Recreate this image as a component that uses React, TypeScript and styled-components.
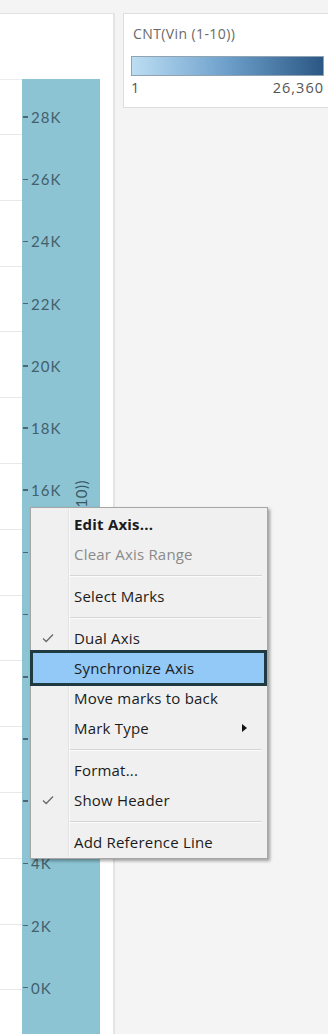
import React from 'react'
import styled, { createGlobalStyle } from 'styled-components'

const GlobalStyle = createGlobalStyle`
  html, body {
    margin: 0;
    padding: 0;
    background: #f4f4f4;
  }
  * {
    box-sizing: border-box;
  }
`

const TICKS = ['28K', '26K', '24K', '22K', '20K', '18K', '16K', '14K', '12K', '10K', '8K', '6K', '4K', '2K', '0K']
const GRID_ROWS = 14

type MenuEntry =
  | { kind: 'item'; label: string; bold?: boolean; disabled?: boolean; checked?: boolean; active?: boolean; submenu?: boolean }
  | { kind: 'sep' }

const MENU: MenuEntry[] = [
  { kind: 'item', label: 'Edit Axis...', bold: true },
  { kind: 'item', label: 'Clear Axis Range', disabled: true },
  { kind: 'sep' },
  { kind: 'item', label: 'Select Marks' },
  { kind: 'sep' },
  { kind: 'item', label: 'Dual Axis', checked: true },
  { kind: 'item', label: 'Synchronize Axis', active: true },
  { kind: 'item', label: 'Move marks to back' },
  { kind: 'item', label: 'Mark Type', submenu: true },
  { kind: 'sep' },
  { kind: 'item', label: 'Format...' },
  { kind: 'item', label: 'Show Header', checked: true },
  { kind: 'sep' },
  { kind: 'item', label: 'Add Reference Line' },
]

const Page = styled.div`
  position: relative;
  display: flex;
  height: 1034px;
  padding-top: 13px;
  overflow: hidden;
  background: #f4f4f4;
  font-family: 'Open Sans', 'Noto Sans', sans-serif;
`

const ChartPane = styled.section`
  display: flex;
  flex-direction: column;
  width: 115px;
  flex-shrink: 0;
  background: #fff;
  border-top: 1px solid #e2e2e2;
  border-right: 2px solid #e4e4e4;
`

const ChartHeader = styled.div`
  height: 65px;
`

const ChartBody = styled.div`
  display: flex;
  flex: 1;
`

const GridArea = styled.div`
  display: flex;
  flex-direction: column;
  width: 22px;
  border-top: 1px solid #ececec;
`

const GridRow = styled.div<{ $first?: boolean }>`
  height: ${p => (p.$first ? 55 : 65.8)}px;
  flex-shrink: 0;
  border-bottom: 1px solid #e8e8e8;
`

const AxisBand = styled.div`
  position: relative;
  display: flex;
  flex-direction: column;
  width: 78px;
  padding-top: 7px;
  background: #8cc4d4;
`

const TickRow = styled.div`
  display: flex;
  align-items: center;
  height: 62.2px;
  flex-shrink: 0;
`

const TickMark = styled.span`
  width: 5px;
  height: 1.5px;
  margin: 0 3px 0 1px;
  background: #4f6670;
`

const TickLabel = styled.span`
  font-family: 'Lato', 'Open Sans', sans-serif;
  font-size: 15px;
  letter-spacing: 1.1px;
  color: #43606c;
`

const AxisTitle = styled.span`
  position: absolute;
  top: 401px;
  left: 50px;
  writing-mode: vertical-rl;
  transform: rotate(180deg);
  white-space: nowrap;
  font-family: 'Lato', 'Open Sans', sans-serif;
  font-size: 15px;
  letter-spacing: 0.5px;
  color: #3a5662;
`

const SidePane = styled.aside`
  flex: 1;
  padding-left: 8px;
`

const LegendCard = styled.div`
  width: 220px;
  height: 95px;
  padding: 11px 0 0 7px;
  background: #fff;
  border: 1px solid #dedede;
`

const LegendTitle = styled.div`
  font-family: 'Open Sans', 'Noto Sans', sans-serif;
  font-size: 14px;
  letter-spacing: 0.4px;
  color: #6a6a6a;
  line-height: 18px;
  margin-left: 2px;
`

const GradientBar = styled.div`
  width: 193px;
  height: 20px;
  margin-top: 13px;
  border: 1px solid #8fa3b3;
  background: linear-gradient(to right, #bcdef3, #6d9fcb 50%, #2b5784);
`

const LegendScale = styled.div`
  display: flex;
  justify-content: space-between;
  width: 193px;
  margin-top: 2px;
  font-family: 'Open Sans', 'Noto Sans', sans-serif;
  font-size: 14.5px;
  letter-spacing: 1px;
  color: #555;
`

const Menu = styled.div`
  position: absolute;
  left: 30px;
  top: 507px;
  width: 238px;
  padding: 1px 0;
  background: #f0f0f0;
  border: 1px solid #a6a6a6;
  box-shadow: 2px 2px 3px rgba(0, 0, 0, 0.35);
  font-family: 'Open Sans', 'Noto Sans', sans-serif;
`

const Item = styled.div<{ $active?: boolean }>`
  position: relative;
  display: flex;
  align-items: center;
  height: 30px;
  ${p =>
    p.$active &&
    `
    z-index: 1;
    margin: 0 3px 0 2px;
    background: #92c9f6;
    outline: 3px solid #1f3a40;
  `}
`

const Gutter = styled.div<{ $hidden?: boolean }>`
  display: flex;
  align-items: center;
  justify-content: center;
  align-self: stretch;
  width: ${p => (p.$hidden ? 36 : 38)}px;
  flex-shrink: 0;
  padding-right: 4px;
  border-right: 1px solid ${p => (p.$hidden ? 'transparent' : '#e2e2e2')};
  box-shadow: ${p => (p.$hidden ? 'none' : '1px 0 0 #fafafa')};
`

const Label = styled.span<{ $bold?: boolean; $disabled?: boolean }>`
  flex: 1;
  padding-left: 5px;
  font-size: 15px;
  letter-spacing: 0.2px;
  font-weight: ${p => (p.$bold ? 700 : 400)};
  color: ${p => (p.$disabled ? '#8a8a8a' : '#1b1b1b')};
  white-space: nowrap;
`

const SubArrow = styled.span`
  width: 0;
  height: 0;
  margin-right: 20px;
  border-top: 4px solid transparent;
  border-bottom: 4px solid transparent;
  border-left: 5px solid #111;
`

const SepRow = styled.div`
  display: flex;
  height: 12px;
`

const SepLine = styled.div`
  flex: 1;
  align-self: center;
  margin: 0 5px 0 1px;
  height: 1px;
  background: #d6d6d6;
  box-shadow: 0 1px 0 #fbfbfb;
`

const Check = () => (
  <svg width="12" height="10" viewBox="0 0 12 10">
    <polyline points="1,5.5 4.2,8.5 11,1.5" fill="none" stroke="#6a6a6a" strokeWidth="1.3" />
  </svg>
)

export default function App() {
  return (
    <>
      <GlobalStyle />
      <Page>
        <ChartPane>
          <ChartHeader />
          <ChartBody>
            <GridArea>
              {Array.from({ length: GRID_ROWS }).map((_, i) => (
                <GridRow key={i} $first={i === 0} />
              ))}
            </GridArea>
            <AxisBand>
              {TICKS.map(t => (
                <TickRow key={t}>
                  <TickMark />
                  <TickLabel>{t}</TickLabel>
                </TickRow>
              ))}
              <AxisTitle>CNT(Vin (1-10))</AxisTitle>
            </AxisBand>
          </ChartBody>
        </ChartPane>
        <SidePane>
          <LegendCard>
            <LegendTitle>CNT(Vin (1-10))</LegendTitle>
            <GradientBar />
            <LegendScale>
              <span>1</span>
              <span>26,360</span>
            </LegendScale>
          </LegendCard>
        </SidePane>
        <Menu>
          {MENU.map((entry, i) =>
            entry.kind === 'sep' ? (
              <SepRow key={i}>
                <Gutter />
                <SepLine />
              </SepRow>
            ) : (
              <Item key={i} $active={entry.active}>
                <Gutter $hidden={entry.active}>{entry.checked && <Check />}</Gutter>
                <Label $bold={entry.bold} $disabled={entry.disabled}>
                  {entry.label}
                </Label>
                {entry.submenu && <SubArrow />}
              </Item>
            )
          )}
        </Menu>
      </Page>
    </>
  )
}
